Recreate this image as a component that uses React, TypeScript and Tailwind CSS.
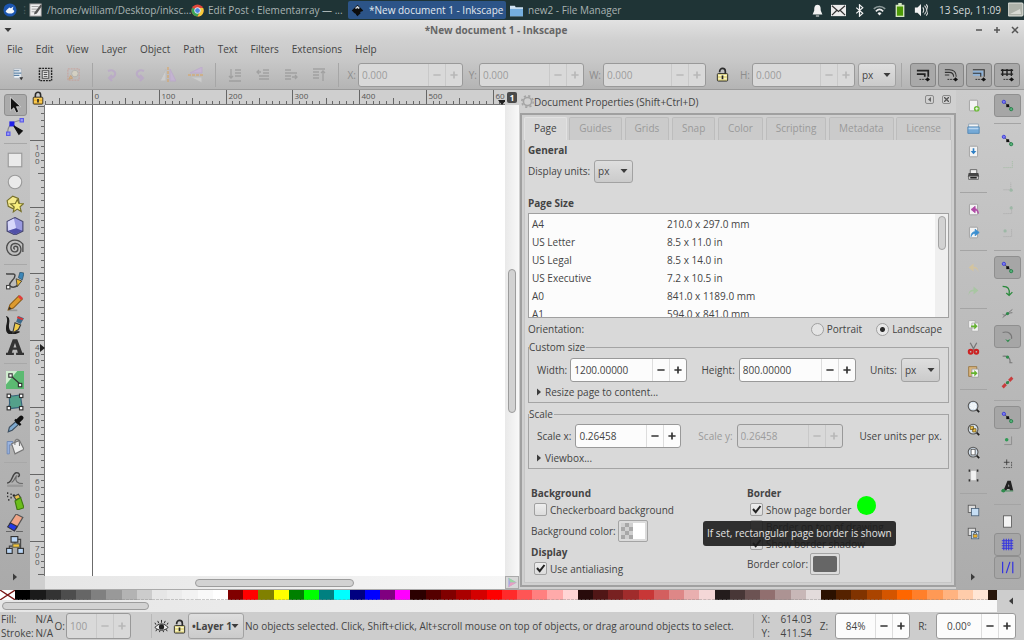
import React from "react";

type IconProps = { children: React.ReactNode; size?: number };

const Icon: React.FC<IconProps> = ({ children, size = 16 }) => (
  <svg width={size} height={size} viewBox="0 0 16 16" fill="none" aria-hidden="true" className="shrink-0">
    {children}
  </svg>
);

const Padlock = ({ open = false }: { open?: boolean }) => (
  <Icon size={open ? 15 : 14}>
    <path d={open ? "M5 5.500V4.500a3 3 0 0 1 6 0V8" : "M5 7V4.500a3 3 0 0 1 6 0V7"} stroke="#2b2b2b" strokeWidth="1.800" />
    <rect x="2.500" y="7" width="11" height="8" rx="1" fill={open ? "#e6dc8a" : "#f0b429"} stroke="#2b2b2b" />
    <path d="M3.500 9h9M3.500 12.500h9" stroke={open ? "#fffbd6" : "#fbe08a"} />
    <path d="M8 9v4" stroke="#222" strokeWidth="1.800" />
  </Icon>
);

const Triangle = ({ dir = "down" }: { dir?: "down" | "right" | "left" }) => (
  <svg width="8" height="8" viewBox="0 0 8 8" aria-hidden="true" className="shrink-0">
    <path
      d={dir === "down" ? "M.5 2h7L4 6z" : dir === "right" ? "M2 .5v7L6 4z" : "M6 .5v7L2 4z"}
      fill="#3c3c3c"
    />
  </svg>
);

type SpinProps = {
  id: string;
  value: string;
  className: string;
  disabled?: boolean;
  center?: boolean;
  label?: string;
};

const Spin: React.FC<SpinProps> = ({ id, value, className, disabled, center, label }) => (
  <div
    className={`flex shrink-0 overflow-hidden rounded-[3px] border ${
      disabled ? "border-[#999] bg-[#d9d9d9] text-[#9c9c9c]" : "border-[#999] bg-[#fcfcfc] text-[#444]"
    } ${className}`}
  >
    <input
      id={id}
      aria-label={label}
      defaultValue={value}
      disabled={disabled}
      className={`w-0 min-w-0 flex-1 bg-transparent px-[3px] outline-none ${center ? "text-center" : ""}`}
    />
    {["M2 5h6", "M2 5h6M5 2v6"].map((d, i) => (
      <button
        key={d}
        type="button"
        disabled={disabled}
        aria-label={i ? "Increase" : "Decrease"}
        className={`flex w-[17px] items-center justify-center ${disabled ? "border-l border-[#c9c9c9]" : "border-l border-[#ddd]"}`}
      >
        <svg width="10" height="10" viewBox="0 0 10 10">
          <path d={d} stroke={disabled ? "#b8b8b8" : "#333"} strokeWidth="1.4" transform="translate(-1 -1) scale(1.2)" />
        </svg>
      </button>
    ))}
  </div>
);

type DropProps = { id?: string; label?: string; value: string; className: string; bold?: boolean };

const Drop: React.FC<DropProps> = ({ id, label, value, className, bold }) => (
  <div
    className={`grid shrink-0 items-center rounded-[3px] border border-[#a2a2a2] bg-gradient-to-b from-[#dedede] to-[#cbcbcb] ${className}`}
  >
    <select
      id={id}
      aria-label={label}
      className={`h-full w-full appearance-none px-[3px] outline-none [grid-area:1/1] ${bold ? "font-bold" : ""}`}
    >
      <option>{value}</option>
    </select>
    <span className="pointer-events-none mr-1 justify-self-end [grid-area:1/1]">
      <Triangle />
    </span>
  </div>
);

const Check: React.FC<{ label: string; checked?: boolean }> = ({ label, checked }) => (
  <label className="flex h-[17px] items-center gap-[3px]">
    <span className="grid size-[13px] shrink-0">
      <input
        type="checkbox"
        defaultChecked={checked}
        className="peer size-[13px] appearance-none rounded-[2px] border border-[#a0a0a0] bg-gradient-to-b from-[#eee] to-[#dcdcdc] [grid-area:1/1]"
      />
      <svg viewBox="0 0 13 13" className="pointer-events-none hidden [grid-area:1/1] peer-checked:block">
        <path d="M3 6l2.7 3.2L10.500 3" fill="none" stroke="#222" strokeWidth="2" />
      </svg>
    </span>
    {label}
  </label>
);

const Radio: React.FC<{ label: string; checked?: boolean }> = ({ label, checked }) => (
  <label className="flex items-center gap-[3px]">
    <input
      type="radio"
      name="orientation"
      defaultChecked={checked}
      className="size-[13px] appearance-none rounded-full border border-[#a0a0a0] bg-[#e4e4e4] checked:bg-[radial-gradient(circle,#2b2b2b_0_2px,#e8e8e8_3px)]"
    />
    {label}
  </label>
);

const nodes = (
  <>
    <path d="M4 4l9 8" stroke="#555" strokeWidth="1.2" />
    <circle cx="3.500" cy="3.500" r="2" fill="#7d7df0" stroke="#3030d8" />
    <rect x="6.500" y="6.500" width="3.500" height="3.500" fill="#111" />
    <circle cx="12.500" cy="12.500" r="2" fill="#58b07a" stroke="#1d7a42" />
  </>
);

const sheet = <rect x="3" y="1.500" width="10" height="13" rx="1" fill="#f3f3f3" stroke="#999" />;

const glass = (
  <>
    <path d="M11 11l4 4" stroke="#222" strokeWidth="2.200" />
    <circle cx="7.500" cy="7.500" r="6" fill="#d5e2ee" stroke="#555" strokeWidth="1.300" />
  </>
);

// null stands for a separator line
const tools: (null | [string, React.ReactNode])[] = [
  ["Select", <path d="M4 1v12l3-2.500 2 4.500 2.300-1-2-4.500H13z" fill="#111" stroke="#eee" strokeWidth=".6" />],
  [
    "Edit paths by nodes",
    <>
      <path d="M1.500 13C1.500 7 5 3 14 2" stroke="#888" />
      <rect x="3" y="3" width="4.500" height="4.500" fill="#2020e8" />
      <rect x="12.500" y=".5" width="3" height="3" fill="#9c9cf5" stroke="#5a5ae8" />
      <rect x=".5" y="12.500" width="3" height="3" fill="#9c9cf5" stroke="#5a5ae8" />
      <path d="M7 7l7.500 4.500-3 3z" fill="#111" stroke="#111" />
    </>,
  ],
  null,
  ["Rectangle", <rect x="2" y="2" width="12" height="12" fill="#eaeaea" stroke="#9a9a9a" />],
  ["Ellipse", <circle cx="8" cy="8" r="6" fill="#eaeaea" stroke="#9a9a9a" />],
  [
    "Star",
    <>
      <path d="M1 5l5-4 5 2 1 6-6 3-4-2z" fill="#f5ea8c" stroke="#77702a" />
      <path d="M10 4l1.500 3.500 4 .3-3 2.700 1 4.200L10 12.500 6.500 15l.8-4.300L4 8l4.300-.5z" fill="#f8ee7c" stroke="#77702a" />
    </>,
  ],
  [
    "3D box",
    <>
      <path d="M1 4l7-3.500L15 4v8.500L8 16l-7-3.500z" fill="#9a9ae0" stroke="#45456e" />
      <path d="M1.500 4.300L7 1.300 9 10l-7 2.500z" fill="#d8d8fa" />
      <path d="M9 10l5.500 2.300L8 15.500 2 12.300z" fill="#5050a8" />
    </>,
  ],
  [
    "Spiral",
    <path
      d="M8 9c-1.600 0-1.500-2.600.5-2.600 2.600 0 3 4.600-.3 5C3.500 12 2.700 4.600 8 4c6.300-.4 7.300 9 1 10.500C2.500 15.500-1 9 1.500 4.500 4 0 11-.5 15 4.500v7"
      stroke="#4c4c4c"
      strokeWidth="1.200"
    />,
  ],
  null,
  [
    "Bezier",
    <>
      <path d="M0 1.500c2 1 8-1 8 1.500 0 4-5 5-5 9 3 3 8 1 8-3" stroke="#444" strokeWidth="1.300" />
      <rect x=".5" y="12" width="3" height="3" fill="#fff" stroke="#444" />
      <path d="M11 5l1.500-5 3.500 1-1.500 6z" fill="#3b86b8" stroke="#2a4a60" strokeWidth=".6" />
      <path d="M9 6l5 2-4 5z" fill="#e8b630" stroke="#333" strokeWidth=".7" />
    </>,
  ],
  [
    "Pencil",
    <>
      <path d="M2 14.500h8" stroke="#999" strokeWidth="1.500" />
      <path d="M2 14l1.500-4.500 8-8 3 3-8 8z" fill="#dd9a2e" stroke="#8a5a14" />
      <path d="M10.500 2.500l2-1.500 2.500 2.500-1.500 2z" fill="#e03c3c" />
      <path d="M2 14l1-3 2 2z" fill="#333" />
    </>,
  ],
  [
    "Calligraphy",
    <>
      <path d="M1 1c4 2-1 7 2 12 2 2 5 1 9 1-4 2-9 3-11 0C-1 9 3 5 1 1z" fill="#1b1b1b" stroke="#1b1b1b" />
      <path d="M9 5l2-5 5 2-3 5z" fill="#3c6a8a" />
      <path d="M10 1l5 2" stroke="#d33" strokeWidth="1.500" />
      <path d="M8 6l5 2-2 4-5 3z" fill="#f0cc4a" stroke="#3a3a3a" />
    </>,
  ],
  ["Text", <path d="M0 15v-2h1.500L6 1h4l4.500 12H16v2H9v-2h1.500l-.7-2.500H6L5.200 13H7v2zM6.600 8.500h2.700L8 4.500z" fill="#333" />],
  null,
  [
    "Gradient",
    <>
      <rect x="0" y="0" width="16" height="16" fill="#5cba72" />
      <path d="M0 0h10L0 12z" fill="#cfeccf" />
      <path d="M4 4l9 8" stroke="#333" />
      <rect x="2.500" y="2.500" width="3" height="3" fill="#fff" stroke="#333" />
      <rect x="11" y="11" width="3" height="3" fill="#fff" stroke="#333" />
    </>,
  ],
  [
    "Mesh",
    <>
      <path d="M3 2c4 2 7-1 11 0-2 5 1 7 0 11-4-1-8 2-12 0 3-4 0-7 1-11z" fill="#54a08a" stroke="#37617a" />
      {[[1, 1], [12, 1], [1, 12], [12, 12]].map(([x, y]) => (
        <rect key={`${x}${y}`} x={x} y={y} width="3" height="3" fill="#fff" stroke="#333" />
      ))}
    </>,
  ],
  [
    "Dropper",
    <>
      <path d="M2 15l1-4 5.500-5L11 8.500l-5.500 5z" fill="#7faad0" stroke="#3c4e60" />
      <path d="M8 4l5 5" stroke="#111" strokeWidth="2" />
      <path d="M10.500 5.500l3-3" stroke="#111" strokeWidth="4" strokeLinecap="round" />
    </>,
  ],
  [
    "Paint bucket",
    <>
      <path d="M1 4h5v3H3v8H1z" fill="#9ab4e0" stroke="#6782b4" strokeWidth=".7" />
      <path d="M5 6l7-3 4 8-8 4z" fill="#eee" stroke="#777" />
      <path d="M8 7c-1-6 4-7 4-1v2" stroke="#777" />
    </>,
  ],
  null,
  [
    "Tweak",
    <>
      <path d="M1 11.500c5 0 4-8 8-9 3-.5 4 3 1.500 3.500" stroke="#444" strokeWidth="1.300" />
      <path d="M5 11c3-1 3-6 5-6M9 6c-1 4 1 6 6 6" stroke="#666" />
      <path d="M1 13h14v2H1z" fill="#999" />
    </>,
  ],
  [
    "Spray",
    <>
      <path d="M1 1h1M4 2h1M1 4h1M4 5h1M2 7h1M6 3h2" stroke="#222" strokeWidth="1.500" />
      <path d="M7 4l4-2 2 3-4 2z" fill="#e8c050" stroke="#444" />
      <path d="M8 8l5-3 3 9-6 2z" fill="#6cbe1c" stroke="#3f7a10" />
    </>,
  ],
  [
    "Eraser",
    <>
      <path d="M3 9L9 0l6 3-6 10z" fill="#f0a486" stroke="#555" />
      <path d="M1.500 11.500L4 8l6 3-2.500 4z" fill="#2438e8" stroke="#334" />
      <path d="M0 15.500h5M9 15.500h6" stroke="#666" />
    </>,
  ],
  [
    "Connector",
    <>
      <path d="M8 3v4M3 12V9h10v3M9 3h4v6" stroke="#444" />
      <rect x="4.500" y=".5" width="6" height="5" fill="#b8d4f4" stroke="#333" />
      <rect x="6" y="7" width="6" height="3" fill="#f4c53a" stroke="#665" />
      <rect x=".5" y="11" width="5" height="4.500" fill="#b8d4f4" stroke="#333" />
      <rect x="10.500" y="11" width="5" height="4.500" fill="#b8d4f4" stroke="#333" />
    </>,
  ],
];

const commands: (null | [string, React.ReactNode])[] = [
  ["New", <>{sheet}<circle cx="12" cy="12" r="3.500" fill="#6dbb3a" /><path d="M12 10v4M10 12h4" stroke="#fff" /></>],
  [
    "Open",
    <>
      <path d="M2 2.500h12v5H2z" fill="#f4f4f4" stroke="#8aa0b4" />
      <path d="M1 6h14v8H1z" fill="#75a9d6" stroke="#4e82b0" />
      <path d="M2 8h12" stroke="#b8d6f0" strokeWidth="2" />
    </>,
  ],
  ["Save", <>{sheet}<path d="M8 4v4" stroke="#2f7fc4" strokeWidth="2" /><path d="M4.500 7.500h7L8 11.500z" fill="#2f7fc4" /></>],
  [
    "Print",
    <>
      <path d="M4 2h8v5H4z" fill="#eee" stroke="#555" />
      <path d="M2 6h12l1 5H1z" fill="#444" />
      <path d="M2 10h12v4H2z" fill="#ddd" stroke="#555" />
      <path d="M4 12h8" stroke="#222" strokeWidth="2" />
    </>,
  ],
  null,
  ["Import", <>{sheet}<path d="M14 13c0-4-2-6-4-6V4L5 8l5 4v-3c2 0 3 1 4 4z" fill="#b04ba6" stroke="#b04ba6" /></>],
  ["Export", <>{sheet}<path d="M5 13c0-4 2-6 5-6V4l5 4-5 4v-3c-2 0-4 1-5 4z" fill="#3b8fd0" stroke="#3b8fd0" /></>],
  null,
  ["Undo", <path d="M14 14c0-5-2-7-6-7V3L2 8l6 5V9c3 0 5 1 6 5z" fill="#d3c4a0" />],
  ["Redo", <path d="M2 14c0-5 2-7 6-7V3l6 5-6 5V9c-3 0-5 1-6 5z" fill="#a8c6a2" />],
  null,
  [
    "Copy",
    <>
      <path d="M2 2h8v9H2zM6 5h8v10H6z" fill="#f2f2f2" stroke="#aaa" />
      <path d="M5 8h4V5l4 4-4 4v-3H5z" fill="#63b32e" />
    </>,
  ],
  [
    "Cut",
    <>
      <path d="M4 1l5 9M12 1L7 10" stroke="#777" strokeWidth="1.500" />
      <circle cx="4.500" cy="12" r="2.300" stroke="#cc2222" strokeWidth="2.500" />
      <circle cx="11.500" cy="12" r="2.300" stroke="#cc2222" strokeWidth="2.500" />
    </>,
  ],
  [
    "Paste",
    <>
      <path d="M2 2h10v12H2z" fill="#d9b37a" stroke="#93713c" />
      <path d="M6 5h8v10H6z" fill="#f4f4f4" stroke="#999" />
      <path d="M5 9h4V6l4 4-4 4v-3H5z" fill="#63b32e" />
    </>,
  ],
  null,
  ["Zoom selection", <>{glass}<rect x="4.500" y="4.500" width="6" height="6" stroke="#fff" strokeDasharray="2 1" fill="#eef4f8" /></>],
  ["Zoom drawing", <>{glass}<path d="M4 4h4v4H4zM7 7h4v4H7z" fill="#eec04a" stroke="#705a20" /></>],
  ["Zoom page", <>{glass}<rect x="5" y="4" width="5" height="7" fill="#fff" stroke="#444" /></>],
  [
    "Zoom page width",
    <>
      <rect x="4.500" y="2" width="7" height="12" fill="#f2f2f2" stroke="#bbb" />
      <path d="M2 2h2M12 2h2M2 14h2M12 14h2" stroke="#333" strokeWidth="2.500" />
    </>,
  ],
  null,
  [
    "Duplicate",
    <>
      <rect x="1.500" y="1.500" width="9" height="9" fill="#ddd" stroke="#555" />
      <rect x="5.500" y="5.500" width="9" height="9" fill="#c6def4" stroke="#4a6078" />
    </>,
  ],
  [
    "Clone",
    <>
      <rect x="1.500" y="1.500" width="9" height="9" fill="#ddd" stroke="#555" />
      <rect x="5.500" y="5.500" width="9" height="9" fill="#c6def4" stroke="#4a6078" />
      <path d="M8.500 9V8a1.500 1.500 0 0 1 3 0v1" stroke="#222" />
      <rect x="7.500" y="9" width="5" height="4" fill="#e8b02c" stroke="#444" strokeWidth=".6" />
    </>,
  ],
];

type Snap = null | [string, React.ReactNode, boolean?];

const snaps: Snap[] = [
  ["Enable snapping", nodes, true],
  null,
  ["Snap bounding boxes", nodes],
  ["Snap edges", <path d="M3 13h11V4" stroke="#a3bda3" strokeDasharray="1.500 1" />],
  ["Snap corners", <><path d="M3 12h9V3" stroke="#aaa" strokeDasharray="1.500 1" /><circle cx="12.500" cy="12.500" r="2" fill="#9db8a6" /></>],
  ["Snap edge midpoints", <><path d="M3 13h10V3" stroke="#aaa" strokeDasharray="1.500 1" /><circle cx="12.500" cy="6" r="2" fill="#9db8a6" /></>],
  ["Snap box centers", <><path d="M3 13h10V3" stroke="#aaa" strokeDasharray="1.500 1" /><circle cx="5" cy="6" r="2" fill="#9db8a6" /></>],
  null,
  ["Snap nodes", nodes, true],
  ["Snap to paths", <path d="M2 3c7 0 9 3 8 10M6.500 11l3.500 3 4-4" stroke="#2a8a3c" strokeWidth="1.600" />],
  ["Snap intersections", <><path d="M2 13L14 3M2 9c4 3 6-2 12-2" stroke="#666" /><circle cx="8" cy="8" r="2" fill="#2f8a4c" /></>],
  ["Snap cusp nodes", <><path d="M2 3c7-2 12 2 11 8" stroke="#777" strokeWidth="1.400" /><path d="M5 11l3 1.500L12 11l-3.500 4z" fill="#2f8a4c" /></>, true],
  ["Snap smooth nodes", <><path d="M2 4c6-1 10 2 9 8h3" stroke="#777" strokeWidth="1.400" /><circle cx="8" cy="5" r="2" fill="#2f8a4c" /></>],
  ["Snap midpoints", <><path d="M3 13L13 3" stroke="#555" /><path d="M2 14l4-4M10 6l4-4" stroke="#c83c3c" strokeWidth="3.500" /><circle cx="8" cy="8" r="2" fill="#2f8a4c" /></>],
  null,
  ["Snap others", nodes, true],
  ["Snap centers", <><path d="M4 13h9V3" stroke="#888" /><circle cx="7" cy="7" r="2.200" fill="#2f9a54" /></>],
  ["Snap rotation center", <><path d="M3 13h10V6" stroke="#444" strokeDasharray="2 1" /><path d="M7 3v7M3.500 6.500h7" stroke="#333" /></>],
  ["Snap text baseline", <><path d="M3 13L8 1h4l3 12h-4l-.5-2H7.500l-1 2zM8.500 8h1.700L9.800 5z" fill="#222" /><path d="M0 13.500h15" stroke="#2f8a4c" /><circle cx="3" cy="13" r="2.300" fill="#2f8a4c" /></>],
  null,
  ["Snap page border", <rect x="3" y="1" width="10" height="14" fill="#f4f4f4" stroke="#555" />],
  ["Snap grids", <path d="M1 3.500h14M1 6.500h14M1 9.500h14M1 12.500h14M3.500 1v14M6.500 1v14M9.500 1v14M12.500 1v14" stroke="#3434e0" strokeWidth="1.300" />, true],
  ["Snap guides", <path d="M2 1v14M6.500 15L11 1M14.500 1v14" stroke="#3434e0" strokeWidth="1.500" />, true],
];

const fadedTools: (null | [string, React.ReactNode])[] = [
  [
    "Select all",
    <>
      <path d="M4 2h8v10H4z" fill="#eef2f6" stroke="#b0b8c0" />
      <path d="M4 4h6M4 6.500h8M4 9h6" stroke="#5d83a6" strokeWidth="1.300" />
      <path d="M10 11h4l-2 3z" fill="#333" />
    </>,
  ],
  [
    "Select all in layers",
    <>
      <rect x="1.500" y="1.500" width="13" height="13" stroke="#222" strokeDasharray="2 1" strokeWidth="1.500" />
      <rect x="4.500" y="4" width="7" height="8" fill="#eee" stroke="#444" />
      <path d="M6 6h4M6 8h4M6 10h4" stroke="#444" />
    </>,
  ],
  [
    "Deselect",
    <>
      <rect x="2" y="2" width="12" height="12" stroke="#d08c80" strokeDasharray="2 1" />
      <circle cx="9.500" cy="7" r="3.500" fill="#e2dcc4" stroke="#a8a8a0" />
      <path d="M3 13l4-1-2-3z" fill="#e0b070" stroke="#c89050" />
    </>,
  ],
  null,
  ["Rotate left", <path d="M4 4c5-2 8 1 7 4-1 2-3 3-5 3M8 8l-3 3 3 3" stroke="#b9a0cc" strokeWidth="2" />],
  ["Rotate right", <path d="M12 4C7 2 4 5 5 8c1 2 3 3 5 3M8 8l3 3-3 3" stroke="#b9a0cc" strokeWidth="2" />],
  [
    "Flip horizontal",
    <>
      <path d="M6 2v12H0z" fill="#d8d8d8" stroke="#bbb" />
      <path d="M10 2v12h6z" fill="#c9aee0" stroke="#bba0d0" />
      <path d="M8 0v16" stroke="#e0a050" strokeDasharray="3 1" strokeWidth="1.500" />
    </>,
  ],
  [
    "Flip vertical",
    <>
      <path d="M2 6h12V0z" fill="#c9aee0" stroke="#bba0d0" />
      <path d="M2 10h12v6z" fill="#d8d8d8" stroke="#bbb" />
      <path d="M0 8h16" stroke="#e0a050" strokeDasharray="3 1" strokeWidth="1.500" />
    </>,
  ],
  null,
  ["Lower to bottom", <path d="M4 2v9M2 9l2 2 2-2M8 3h6M8 6h6M8 9h6M2 14h12" stroke="#8e8e8e" strokeWidth="1.300" />],
  ["Lower", <path d="M8 3h6M8 6h6M4 9h10M4 12h10M6 5H2M4 3L2 5l2 2" stroke="#8e8e8e" strokeWidth="1.300" />],
  ["Raise", <path d="M2 3h6M2 6h12M2 9h6M2 12h6M9 10h5M12 8l2 2-2 2" stroke="#8e8e8e" strokeWidth="1.300" />],
  ["Raise to top", <path d="M2 2h12M2 5h6M2 8h6M2 11h6M12 14V4M10 6l2-2 2 2" stroke="#8e8e8e" strokeWidth="1.300" />],
  null,
];

const affects: [string, React.ReactNode][] = [
  ["Scale stroke width", <path d="M1 3h13v7M1 7h9v3" stroke="#222" strokeWidth="2" />],
  ["Scale rounded corners", <path d="M1 2h5c5 0 8 3 8 8M1 5h5c3 0 5 2 5 5M1 8h5" stroke="#333" strokeWidth="1.200" />],
  ["Move gradients", <><path d="M1 3h12v6H1z" fill="#8fb2d6" /><path d="M1 2h13v8M1 6h9v4" stroke="#333" strokeWidth="1.300" /></>],
  ["Move patterns", <path d="M1 2.500h14M1 7h14M3 1v8M8 1v8M13 1v8" stroke="#222" strokeWidth="1.600" />],
];

const menus = ["File", "Edit", "View", "Layer", "Object", "Path", "Text", "Filters", "Extensions", "Help"];

const tabs = ["Page", "Guides", "Grids", "Snap", "Color", "Scripting", "Metadata", "License"];

const pageSizes = [
  ["A4", "210.0 x 297.0 mm"],
  ["US Letter", "8.5 x 11.0 in"],
  ["US Legal", "8.5 x 14.0 in"],
  ["US Executive", "7.2 x 10.5 in"],
  ["A0", "841.0 x 1189.0 mm"],
  ["A1", "594.0 x 841.0 mm"],
];

const palette = (
  "000000 1a1a1a 333333 4d4d4d 666666 808080 999999 b3b3b3 cccccc e6e6e6 ececec f2f2f2 f9f9f9 ffffff " +
  "800000 ff0000 808000 ffff00 008000 00ff00 008080 00ffff 000080 0000ff 800080 ff00ff " +
  "2b0000 550000 800000 aa0000 d40000 ff0000 ff2a2a ff5555 ff8080 ffaaaa ffd5d5 " +
  "280b0b 501616 782121 a02c2c c83737 d35f5f de8787 e9afaf f4d7d7 " +
  "241c1c 483737 6c5353 916f6f ac9393 c8b7b7 e3dbdb " +
  "2b1100 552200 803300 aa4400 d45500 ff6600 ff7f2a ff9955 ffb380 ffccaa ffe6d5"
).split(" ");

const Taskbar = () => (
  <header className="flex h-5 items-center whitespace-nowrap bg-[#1f3436] text-[#a9b3b3]">
    <span className="flex w-5 justify-center">
      <Icon size={14}>
        <circle cx="8" cy="8" r="7.500" fill="#1c56b0" />
        <path d="M3 10c1-3 3-3 4-5l2 1 3-2-1 3 2 2c-1 4-7 4-10 1z" fill="#f4f8fc" />
      </Icon>
    </span>
    <span className="w-[9px] text-center text-[#4d5f60]">⁝</span>
    <a href="#editor" className="flex w-[162px] items-center gap-1">
      <Icon size={14}>
        <rect x="1" y="1" width="13" height="14" fill="#eee" stroke="#888" />
        <path d="M3 4h8M3 7h6M3 10h4" stroke="#999" />
        <path d="M6 11l7-9 2 1-6 9-3 1z" fill="#555" />
      </Icon>
      <span>/home/william/Desktop/inksc...</span>
    </a>
    <a href="#browser" className="flex w-[157px] items-center gap-1">
      <Icon size={13}>
        <circle cx="8" cy="8" r="7.500" fill="#e0463a" />
        <path d="M1.500 4.500A7.500 7.500 0 0 0 8 15.500L11 9z" fill="#3ba455" />
        <path d="M8 15.500A7.500 7.500 0 0 0 15 5H8l3 5z" fill="#f6cb3c" />
        <circle cx="8" cy="8" r="3.500" fill="#4a86e0" stroke="#fff" />
      </Icon>
      <span>Edit Post ‹ Elementarray — ...</span>
    </a>
    <a href="#inkscape" className="flex h-[18px] w-[158px] items-center gap-[5px] rounded-[2px] bg-[#2c5488] px-[3px] text-[#e3e9f0]">
      <Icon size={13}>
        <path d="M8 1l7 7c-1 2-3 1-4 2 2 1 0 2-1 3l-2 2-2-2c1-1-1-1-3-3 0-1-2-1-2-2z" fill="#0c0c0c" />
        <path d="M8 2l3 3-2 1-1-1-2 1-1-1z" fill="#cfd6dd" />
      </Icon>
      <span>*New document 1 - Inkscape</span>
    </a>
    <a href="#files" className="flex items-center gap-[5px] pl-1">
      <Icon size={13}>
        <path d="M0 2h6l1 2h9v11H0z" fill="#cfe2f2" />
        <path d="M0 6h16v9H0z" fill="#75aede" />
      </Icon>
      <span>new2 - File Manager</span>
    </a>
    <div className="ml-auto flex items-center gap-[7px] text-[#d8dcdc]">
      <Icon size={13}>
        <path d="M8 1c4 0 4 4 4 7l2 5H2l2-5c0-3 0-7 4-7zM6 14h4v1.500H6z" fill="#f2f2f2" />
      </Icon>
      <Icon size={15}>
        <rect x="0" y="2" width="16" height="12" fill="#ececec" />
        <path d="M1 3l7 6 7-6M1 13l5-5M15 13l-5-5" stroke="#333" strokeWidth="1.300" />
      </Icon>
      <Icon size={13}>
        <path d="M4 4.500l8 7L8 15V1l4 3.500-8 7" stroke="#f2f2f2" strokeWidth="1.500" />
      </Icon>
      <Icon size={13}>
        <path d="M1 6c4-4 10-4 14 0" stroke="#8e9b9b" strokeWidth="2" />
        <path d="M3.500 9c3-3 6-3 9 0" stroke="#e8e8e8" strokeWidth="2" />
        <path d="M5.500 11.500c2-2 3-2 5 0L8 14z" fill="#f2f2f2" />
      </Icon>
      <Icon size={14}>
        <path d="M6 0h4v2h3v14H3V2h3z" fill="#d5e8c0" />
        <path d="M4.500 4h7v10.500h-7z" fill="#4e9a06" />
      </Icon>
      <Icon size={14}>
        <path d="M1 5h3l4-4v14l-4-4H1z" fill="#f2f2f2" />
        <path d="M10 5c1.500 2 1.500 4 0 6M12 3c3 3 3 7 0 10M14 1.500c3 4 3 9 0 13" stroke="#e0e0e0" strokeWidth="1.200" />
      </Icon>
      <span className="pl-1">13 Sep, 11:09</span>
      <Icon size={16}>
        <rect x="0" y="1" width="15" height="13" rx="1" fill="#aeb2aa" stroke="#e4e6e0" />
        <path d="M2 12h11l-1-5z" fill="#d8dad4" />
      </Icon>
    </div>
  </header>
);

const TopToolbar = () => (
  <div className="flex h-[30px] items-center border-b border-[#9a9a9a] bg-gradient-to-b from-[#c8c8c8] to-[#b4b4b4] pl-[3px] pr-1 text-[#8c8c8c]">
    {fadedTools.map((tool, i) =>
      tool ? (
        <button
          key={i}
          type="button"
          aria-label={tool[0]}
          className={`flex w-7 shrink-0 justify-center ${i > 1 ? "opacity-60" : ""}`}
        >
          <Icon size={i < 3 ? 15 : 16}>{tool[1]}</Icon>
        </button>
      ) : (
        <span key={i} className="mx-[5px] h-6 w-px shrink-0 bg-[#a6a6a6]" />
      )
    )}
    <label htmlFor="tx" className="w-3 text-right">X:</label>
    <Spin id="tx" value="0.000" disabled className="ml-[2px] h-6 w-[105px]" />
    <label htmlFor="ty" className="w-[14px] text-right">Y:</label>
    <Spin id="ty" value="0.000" disabled className="ml-[2px] h-6 w-[105px]" />
    <label htmlFor="tw" className="w-[17px] text-right">W:</label>
    <Spin id="tw" value="0.000" disabled className="ml-[2px] h-6 w-[103px]" />
    <button type="button" aria-label="Lock ratio" className="flex w-8 shrink-0 justify-center">
      <Padlock open />
    </button>
    <label htmlFor="th" className="w-3 text-right">H:</label>
    <Spin id="th" value="0.000" disabled className="ml-[2px] h-6 w-[103px]" />
    <Drop label="Units" value="px" className="ml-[3px] h-6 w-[38px] text-[#444]" />
    <span className="mx-[5px] h-6 w-px shrink-0 bg-[#a6a6a6]" />
    <div className="ml-auto flex gap-[2px]">
      {affects.map(([label, icon]) => (
        <button
          key={label}
          type="button"
          aria-label={label}
          className="flex h-6 w-[26px] items-center justify-center rounded-[3px] border border-[#858585] bg-[#a9a9a9]"
        >
          <Icon size={14}>
            {icon}
            <path d="M4 13h2M7 13h2M10 13h3" stroke="#222" />
            <path d="M13 10.500l3 2.500-3 2.500-2-2.500z" fill="#111" />
          </Icon>
        </button>
      ))}
    </div>
  </div>
);

const Column: React.FC<{ items: Snap[]; label: string }> = ({ items, label }) => (
  <nav aria-label={label} className="flex w-[34px] shrink-0 flex-col items-center bg-gradient-to-b from-[#cbcbcb] to-[#acacac] pt-1">
    {items.map((item, i) =>
      item ? (
        <button
          key={i}
          type="button"
          aria-label={item[0]}
          className={`flex h-[23px] w-[27px] items-center justify-center rounded-[3px] ${
            item[2] ? "border border-[#8f8f8f] bg-[#a6a6a6]" : ""
          }`}
        >
          <Icon size={13}>{item[1]}</Icon>
        </button>
      ) : (
        <span key={i} className="flex h-3 w-[27px] items-center">
          <span className="h-px w-full bg-[#a4a4a4]" />
        </span>
      )
    )}
    {label === "Commands" && (
      <span className="mt-auto pb-2">
        <Triangle dir="right" />
      </span>
    )}
  </nav>
);

// 100 user units span 67 screen pixels at the current zoom
const marks = Array.from({ length: 300 }, (_, i) => i - 20);
const labels = [0, 10, 20, 30, 40, 50, 60, 70];
const at = (i: number) => Math.round(i * 6.68) + 0.5;
const tick = (i: number) => (i % 10 === 0 ? 15 : i % 5 === 0 ? 7 : 4);

const Canvas = () => (
  <section className="grid min-w-0 flex-1 grid-cols-[15px_1fr_14px] grid-rows-[15px_1fr_13px] bg-[#cfcfcf]">
    <button type="button" aria-label="Lock guides" className="flex items-center justify-center">
      <Padlock />
    </button>
    <svg className="h-full w-full overflow-hidden">
      {marks.map((i) => (
        <path key={i} d={`M${47 + at(i)} ${15 - tick(i)}V15`} stroke="#666" />
      ))}
      {labels.slice(0, 7).map((i) => (
        <text key={i} x={49 + at(i)} y="9" fontSize="8" fill="#555">{i * 10}</text>
      ))}
      <path d="M0 14.500H2000" stroke="#777" />
      <path d="M453 10h8l-4 5z" fill="#222" />
    </svg>
    <span className="flex items-center justify-center">
      <span className="rounded-[2px] bg-[#4a4a4a] px-[3px] text-[8px] font-bold leading-[11px] text-white">1</span>
    </span>

    <svg className="h-full w-full overflow-hidden">
      {marks.map((i) => (
        <path key={i} d={`M${15 - tick(i)} ${at(i) - 32}H15`} stroke="#666" />
      ))}
      {labels.slice(1).map((i) => (
        <text key={i} fontSize="8" fill="#555">
          {String(i * 10).split("").map((c, n) => (
            <tspan key={n} x="5" y={at(i) - 23 + n * 7}>{c}</tspan>
          ))}
        </text>
      ))}
      <path d="M14.500 0V2000" stroke="#777" />
      <path d="M10 239v8l5-4z" fill="#222" />
    </svg>
    <div className="overflow-hidden bg-white pl-[47px]">
      <div className="h-full border-l border-[#6b6b6b]" />
    </div>
    <div className="grid grid-rows-[164fr_143fr_163fr] justify-items-center bg-gradient-to-r from-[#e9e9e9] to-[#f8f8f8]">
      <span className="row-start-2 w-2 rounded-full border border-[#9c9c9c] bg-[#d2d2d2]" />
    </div>

    <span />
    <div className="grid grid-cols-[150fr_160fr_151fr] items-center bg-gradient-to-r from-[#e6e6e6] to-[#f6f6f6]">
      <span className="col-start-2 h-2 rounded-full border border-[#9c9c9c] bg-[#d2d2d2]" />
    </div>
    <button type="button" aria-label="Color management" className="flex items-center justify-center border border-[#aaa] bg-[#d8d8d8]">
      <Icon size={11}>
        <path d="M2 1l12 7-12 7z" fill="#a8a8e0" />
        <path d="M2 1l12 7H5z" fill="#9ad8a0" />
        <path d="M2 15l12-7H5z" fill="#e8a0c0" />
      </Icon>
    </button>
  </section>
);

const DocumentProperties = () => (
  <aside className="flex w-[437px] shrink-0 flex-col bg-[#d0d0d0] pl-px pb-[2px]">
    <div className="flex h-[23px] items-center pl-px">
      <Icon size={13}>
        <circle cx="8" cy="8" r="5" stroke="#a4a4a4" strokeWidth="2" />
        <circle cx="8" cy="8" r="7" stroke="#a4a4a4" strokeWidth="2" strokeDasharray="2.700 2.800" />
      </Icon>
      <h2>Document Properties (Shift+Ctrl+D)</h2>
      <div className="mb-1 ml-auto mr-[5px] flex gap-2">
        <button type="button" aria-label="Iconify" className="flex size-[9px] items-center justify-center rounded-[2px] border border-[#8a8a8a]">
          <svg width="5" height="5" viewBox="0 0 5 5"><path d="M4 0v5L1 2.500z" fill="#666" /></svg>
        </button>
        <button type="button" aria-label="Close" className="flex size-[9px] items-center justify-center rounded-[2px] border border-[#8a8a8a]">
          <svg width="5" height="5" viewBox="0 0 5 5"><path d="M0 0l5 5M5 0L0 5" stroke="#555" strokeWidth="1.300" /></svg>
        </button>
      </div>
    </div>

    <div className="flex flex-1 flex-col border-2 border-[#a0a0a0] px-[2px] pb-[2px] pt-[2px]">
      <div role="tablist" className="flex justify-between pr-px">
        {tabs.map((tab, i) => (
          <button
            key={tab}
            type="button"
            role="tab"
            aria-selected={i === 0}
            className={`h-[23px] rounded-t-[2px] border border-b-0 px-[9px] pb-[2px] ${
              i === 0 ? "border-[#e2e2e2] bg-[#d9d9d9]" : "border-[#bdbdbd] bg-[#cbcbcb] text-[#9a9a9a]"
            }`}
          >
            {tab}
          </button>
        ))}
      </div>

      <div className="flex flex-1 flex-col border border-t-0 border-[#c6c6c6] bg-[#d9d9d9] pl-[3px] pr-[2px]">
        <h3 className="h-5 pt-[3px] font-bold">General</h3>
        <div className="flex h-[22px] items-center gap-1">
          <label htmlFor="display-units">Display units:</label>
          <Drop id="display-units" value="px" className="h-[23px] w-[39px]" />
        </div>

        <h3 className="mt-[14px] h-[17px] font-bold">Page Size</h3>
        <div className="flex h-[105px] overflow-hidden border border-[#a0a0a0] bg-[#fcfcfc]">
          <table className="mt-px h-fit flex-1 table-fixed text-left">
            <tbody>
              {pageSizes.map(([name, size]) => (
                <tr key={name} className="h-[18px]">
                  <td className="w-[138px] pl-[3px]">{name}</td>
                  <td>{size}</td>
                </tr>
              ))}
            </tbody>
          </table>
          <div className="flex w-[13px] justify-center bg-[#efefef] pt-[2px]">
            <span className="h-[34px] w-2 rounded-full border border-[#a4a4a4] bg-[#d2d2d2]" />
          </div>
        </div>

        <div role="radiogroup" aria-label="Orientation" className="flex h-[22px] items-center pr-[7px]">
          <span>Orientation:</span>
          <div className="ml-auto flex gap-[14px]">
            <Radio label="Portrait" />
            <Radio label="Landscape" checked />
          </div>
        </div>

        <fieldset className="border border-[#a4a4a4] pt-1">
          <legend className="h-[14px] pr-px">Custom size</legend>
          <div className="flex items-center pl-2 pr-2">
            <label htmlFor="w">Width:</label>
            <Spin id="w" value="1200.00000" className="ml-[3px] h-6 w-[117px]" />
            <label htmlFor="h" className="ml-auto">Height:</label>
            <Spin id="h" value="800.00000" className="ml-1 mr-auto h-6 w-[117px]" />
            <label htmlFor="u">Units:</label>
            <Drop id="u" value="px" className="ml-1 h-6 w-[39px]" />
          </div>
          <button type="button" className="flex h-5 items-center gap-[2px] pl-[6px]">
            <Triangle dir="right" />
            Resize page to content...
          </button>
        </fieldset>

        <fieldset className="mt-1 border border-[#a4a4a4] pt-[3px]">
          <legend className="h-[14px] pr-px">Scale</legend>
          <div className="flex items-center pl-2 pr-[6px]">
            <label htmlFor="sx">Scale x:</label>
            <Spin id="sx" value="0.26458" className="ml-1 h-6 w-[106px]" />
            <label htmlFor="sy" className="ml-auto text-[#9a9a9a]">Scale y:</label>
            <Spin id="sy" value="0.26458" disabled className="ml-1 mr-auto h-6 w-[106px]" />
            <span>User units per px.</span>
          </div>
          <button type="button" className="flex h-5 items-center gap-[2px] pl-[6px]">
            <Triangle dir="right" />
            Viewbox...
          </button>
        </fieldset>

        <div className="mt-4 grid grid-cols-[216px_1fr] pl-[3px]">
          <div className="flex flex-col">
            <h3 className="flex h-4 items-center font-bold">Background</h3>
            <div className="pl-[3px]"><Check label="Checkerboard background" /></div>
            <div className="flex h-[25px] items-center gap-[2px]">
              Background color:
              <button type="button" aria-label="Background color" className="h-[22px] w-[30px] rounded-[2px] border border-[#a4a4a4] bg-[#dcdcdc] p-[2px]">
                <span className="flex h-full">
                  <span className="flex-1 bg-[repeating-conic-gradient(#a8a8a8_0_25%,#d0d0d0_0_50%)] bg-[length:8px_8px]" />
                  <span className="flex-1 bg-white" />
                </span>
              </button>
            </div>
            <h3 className="flex h-[17px] items-center font-bold">Display</h3>
            <div className="pl-[3px]"><Check label="Use antialiasing" checked /></div>
          </div>
          <div className="relative flex flex-col">
            <h3 className="flex h-4 items-center font-bold">Border</h3>
            <div className="pl-[3px]">
              <Check label="Show page border" checked />
              <Check label="Border on top of drawing" />
              <Check label="Show border shadow" checked />
            </div>
            <div className="flex h-6 items-center gap-[2px]">
              Border color:
              <button type="button" aria-label="Border color" className="h-[22px] w-[30px] rounded-[2px] border border-[#a4a4a4] bg-[#dcdcdc] p-[2px]">
                <span className="block h-full rounded-[2px] bg-[#666]" />
              </button>
            </div>
            <span className="absolute left-[110px] top-[11px] size-[19px] rounded-full bg-[#00ff00]" />
            <div
              role="tooltip"
              className="absolute -left-11 top-9 whitespace-nowrap rounded-[3px] bg-[#1c1c1c]/90 px-1 py-[5px] leading-[15px] text-[#e4e4e4]"
            >
              If set, rectangular page border is shown
            </div>
          </div>
        </div>
      </div>
    </div>
  </aside>
);

const StatusBar = () => (
  <footer className="flex h-7 items-center whitespace-nowrap bg-[#cdcdcd] pr-2">
    <div className="grid w-[53px] grid-cols-[auto_auto] justify-between pl-px leading-[14px]">
      <span>Fill:</span>
      <span>N/A</span>
      <span>Stroke:</span>
      <span>N/A</span>
    </div>
    <label htmlFor="opacity" className="w-3 text-right">O:</label>
    <Spin id="opacity" value="100" disabled className="ml-px h-[26px] w-[65px]" />
    <span className="ml-5 mr-[2px] h-6 w-px bg-[#b8b8b8]" />
    <button type="button" aria-label="Layer visibility" className="mr-[3px]">
      <Icon size={15}>
        <path d="M1 9c4-5 10-5 14 0-4 4-10 4-14 0z" fill="#eee" stroke="#222" />
        <circle cx="8" cy="8.500" r="2.800" fill="#222" />
        <path d="M2 6L1 4M5 4.500L4 2M8 4V1M11 4.500L12 2M14 6l1-2M3 11l-1 2M6 12.500V14M10 12.500V14M13 11l1 2" stroke="#222" />
      </Icon>
    </button>
    <button type="button" aria-label="Layer lock" className="mr-px">
      <Padlock open />
    </button>
    <Drop label="Current layer" value="•Layer 1" bold className="h-[26px] w-14" />
    <p className="min-w-0 flex-1 pl-px">
      No objects selected. Click, Shift+click, Alt+scroll mouse on top of objects, or drag around objects to select.
    </p>
    <span className="mr-2 h-6 w-px bg-[#b8b8b8]" />
    <div className="grid grid-cols-[19px_auto] leading-[14px]">
      <span>X:</span>
      <span>614.03</span>
      <span>Y:</span>
      <span>411.54</span>
    </div>
    <label htmlFor="zoom" className="ml-2 mr-[7px]">Z:</label>
    <Spin id="zoom" value="84%" center className="h-[26px] w-[75px]" />
    <label htmlFor="rotation" className="ml-2 mr-[9px]">R:</label>
    <Spin id="rotation" value="0.00°" center className="h-[26px] w-20" />
  </footer>
);

const App: React.FC = () => {
  return (
    <div className="flex min-h-screen flex-col overflow-hidden bg-[#cdcdcd] font-['Open_Sans','Noto_Sans',sans-serif] text-[10px] leading-[14px] text-[#444]">
      <Taskbar />
      <div className="grid h-5 grid-cols-[1fr_auto_1fr] items-center bg-gradient-to-b from-[#e2e2e2] to-[#d0d0d0] px-1 text-[#666]">
        <Triangle />
        <h1 className="pr-8 font-bold">*New document 1 - Inkscape</h1>
        <div className="flex justify-end gap-2">
          {["M2 5h6", "M2 5h6M5 2v6", "M2 2l6 6M8 2l-6 6"].map((d, i) => (
            <button key={d} type="button" aria-label={["Minimize", "Maximize", "Close"][i]}>
              <svg width="10" height="10" viewBox="0 0 10 10"><path d={d} stroke="#555" strokeWidth="1.500" /></svg>
            </button>
          ))}
        </div>
      </div>
      <nav className="flex h-5 items-center gap-[13px] bg-gradient-to-b from-[#d0d0d0] to-[#c8c8c8] px-[7px] pb-[2px]">
        {menus.map((m) => (
          <button key={m} type="button">{m}</button>
        ))}
      </nav>
      <TopToolbar />

      <main className="flex flex-1 border-b border-[#aaa]">
        <nav aria-label="Tools" className="flex w-[30px] shrink-0 flex-col items-center bg-gradient-to-b from-[#c9c9c9] to-[#aaaaaa] pt-1">
          {tools.map((tool, i) =>
            tool ? (
              <button
                key={i}
                type="button"
                aria-label={tool[0]}
                className={`flex h-[22px] w-[23px] shrink-0 items-center justify-center ${
                  i === 0 ? "rounded-[3px] border border-[#8f8f8f] bg-[#ababab]" : ""
                }`}
              >
                <Icon size={18}>{tool[1]}</Icon>
              </button>
            ) : (
              <span key={i} className="my-[5px] h-px w-[23px] bg-[#a8a8a8]" />
            )
          )}
          <span className="mt-auto pb-2">
            <Triangle dir="right" />
          </span>
        </nav>
        <Canvas />
        <DocumentProperties />
        <Column label="Commands" items={commands as Snap[]} />
        <Column label="Snapping" items={snaps} />
      </main>

      <div className="flex">
        <div className="min-w-0 flex-1">
          <div className="flex h-[10px]">
            <button type="button" aria-label="No color" className="flex-1 bg-white">
              <svg viewBox="0 0 15 10" preserveAspectRatio="none" className="h-full w-full">
                <path d="M0 0l15 10M15 0L0 10" stroke="#7a1616" strokeWidth="1.300" />
              </svg>
            </button>
            {palette.map((c, i) => (
              <button
                key={i}
                type="button"
                aria-label={`#${c}`}
                className="flex-1 border-b border-dashed border-[#888]/40"
                style={{ backgroundColor: `#${c}` }}
              />
            ))}
            <button type="button" aria-label="#28170b" className="flex-[0.6] bg-[#28170b]" />
          </div>
          <div className="flex h-3 items-center bg-gradient-to-r from-[#e6e6e6] to-[#f8f8f8] pl-[2px]">
            <span className="h-2 w-[147px] rounded-full border border-[#9c9c9c] bg-[#d2d2d2]" />
          </div>
        </div>
        <button type="button" aria-label="Palette menu" className="flex w-[27px] items-center justify-center">
          <Triangle dir="left" />
        </button>
      </div>
      <StatusBar />
    </div>
  );
};

export default App;
